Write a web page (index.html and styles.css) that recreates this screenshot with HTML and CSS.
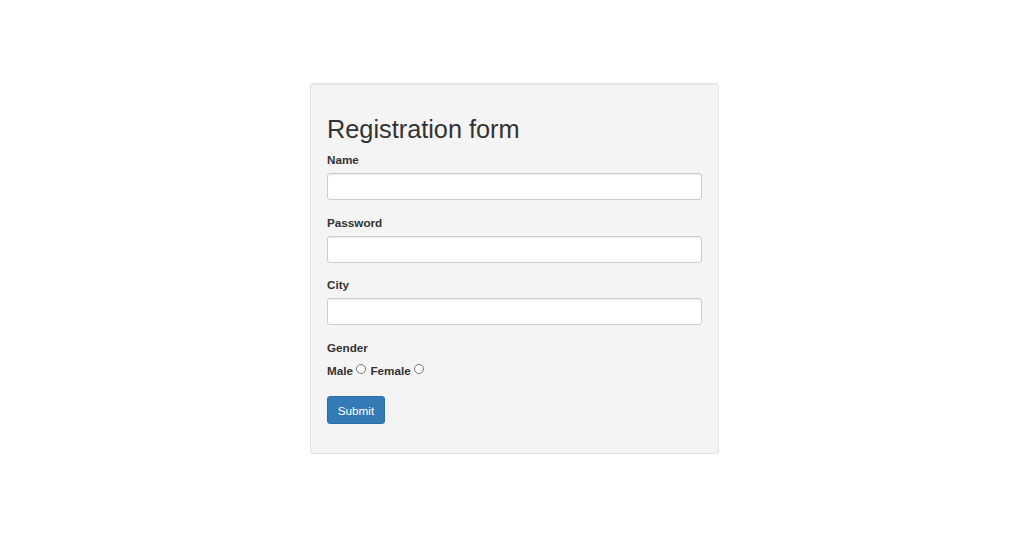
FILE: index.html
```html
<!DOCTYPE html>
<html>
<head>
<meta charset="utf-8">
<link rel="stylesheet" href="styles.css">
</head>
<body>
<div class="well">
  <h2 class="title">Registration form</h2>
  <form>
    <div class="group">
      <label class="lbl">Name</label>
      <input class="field" type="text">
    </div>
    <div class="group">
      <label class="lbl">Password</label>
      <input class="field" type="password">
    </div>
    <div class="group">
      <label class="lbl">City</label>
      <input class="field" type="text">
    </div>
    <div class="group gender">
      <label class="lbl">Gender</label>
      <div class="radios">
        <label class="opt">Male <input class="radio" type="radio" name="g"></label>
        <label class="opt">Female <input class="radio" type="radio" name="g"></label>
      </div>
    </div>
    <button class="btn" type="button">Submit</button>
  </form>
</div>
</body>
</html>
```
FILE: styles.css
```css
html, body {
  margin: 0;
  padding: 0;
  background: #fff;
}
body {
  font-family: "Liberation Sans", Arial, Helvetica, sans-serif;
  color: #333;
  font-size: 11.7px;
}
.well {
  box-sizing: border-box;
  width: 409px;
  height: 371px;
  margin: 83px 0 0 310px;
  padding: 16px;
  background: #f4f4f4;
  border: 1px solid #e3e3e3;
  border-radius: 3px;
  box-shadow: inset 0 1px 1px rgba(0,0,0,0.04);
}
.title {
  margin: 15px 0 8px;
  font-size: 25.3px;
  line-height: 28px;
  font-weight: 500;
  color: #333;
}
.group {
  margin-bottom: 13.5px;
}
.lbl {
  display: block;
  font-weight: bold;
  line-height: 17px;
  margin-bottom: 5px;
  font-size: 11.7px;
}
.field {
  display: block;
  box-sizing: border-box;
  width: 375px;
  height: 27px;
  margin: 0;
  padding: 5px 10px;
  background: #fff;
  border: 1px solid #ccc;
  border-radius: 3px;
  box-shadow: inset 0 1px 1px rgba(0,0,0,0.075);
  font: inherit;
}
.gender {
  margin-bottom: 15.5px;
}
.radios {
  line-height: 20px;
  height: 20px;
}
.opt {
  font-weight: bold;
  font-size: 11.7px;
}
.radio {
  appearance: none;
  -webkit-appearance: none;
  width: 10px;
  height: 10px;
  margin: 0 1px 0 0;
  border: 1px solid #767676;
  border-radius: 50%;
  background: #fff;
  box-sizing: border-box;
  vertical-align: 1px;
}
.btn {
  display: block;
  box-sizing: border-box;
  width: 58px;
  height: 28px;
  padding: 0;
  margin: 0;
  background: #337ab7;
  border: 1px solid #2e6da4;
  border-radius: 3px;
  color: #fff;
  font-family: inherit;
  font-size: 11.7px;
}
```
